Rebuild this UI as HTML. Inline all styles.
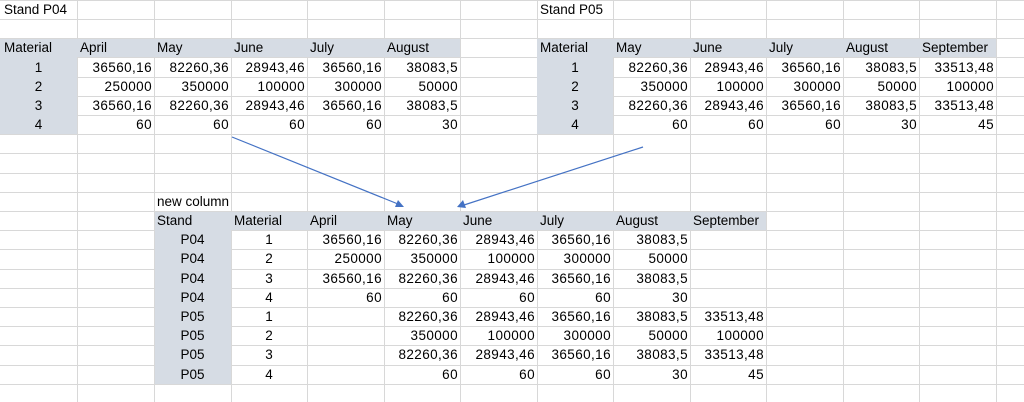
<!DOCTYPE html>
<html><head><meta charset="utf-8"><style>
body{margin:0;width:1024px;height:402px;overflow:hidden;background:#fff;position:relative;font-family:"Liberation Sans",sans-serif;font-size:13.5px;color:#000}
.v{position:absolute;top:0;width:1px;height:402px;background:#d8d8d8}
.h{position:absolute;left:0;height:1px;width:1024px;background:#d8d8d8}
.g{position:absolute;background:#d6dce4}
.c{position:absolute;height:19px;line-height:20px;white-space:nowrap;box-sizing:border-box;padding:0 3px}
.r{text-align:right;letter-spacing:0.4px;padding-right:2px}.m{text-align:center}.l{text-align:left}
</style></head><body>
<div class="v" style="left:77px"></div><div class="v" style="left:154px"></div><div class="v" style="left:231px"></div><div class="v" style="left:307px"></div><div class="v" style="left:384px"></div><div class="v" style="left:460px"></div><div class="v" style="left:537px"></div><div class="v" style="left:613px"></div><div class="v" style="left:690px"></div><div class="v" style="left:766px"></div><div class="v" style="left:843px"></div><div class="v" style="left:919px"></div><div class="v" style="left:996px"></div>
<div class="h" style="top:0"></div><div class="h" style="top:19px"></div><div class="h" style="top:38px"></div><div class="h" style="top:57px"></div><div class="h" style="top:77px"></div><div class="h" style="top:96px"></div><div class="h" style="top:115px"></div><div class="h" style="top:134px"></div><div class="h" style="top:153px"></div><div class="h" style="top:173px"></div><div class="h" style="top:192px"></div><div class="h" style="top:211px"></div><div class="h" style="top:230px"></div><div class="h" style="top:249px"></div><div class="h" style="top:269px"></div><div class="h" style="top:288px"></div><div class="h" style="top:307px"></div><div class="h" style="top:326px"></div><div class="h" style="top:345px"></div><div class="h" style="top:365px"></div><div class="h" style="top:384px"></div>
<div style="position:absolute;left:155px;top:193px;width:75px;height:18px;background:#fff"></div>
<div class="g" style="left:0;top:39px;width:460px;height:18px"></div>
<div class="g" style="left:0;top:39px;width:77px;height:95px"></div>
<div class="g" style="left:537px;top:39px;width:459px;height:18px"></div>
<div class="g" style="left:537px;top:39px;width:76px;height:95px"></div>
<div class="g" style="left:155px;top:212px;width:611px;height:18px"></div>
<div class="g" style="left:155px;top:212px;width:76px;height:172px"></div>

<div class="c l" style="left:1px;top:0">Stand P04</div>
<div class="c l" style="left:537px;top:0">Stand P05</div>
<div class="c l" style="left:154px;top:192px">new column</div>

<div class="c l" style="left:1px;top:38px">Material</div><div class="c l" style="left:77px;top:38px">April</div><div class="c l" style="left:154px;top:38px">May</div><div class="c l" style="left:231px;top:38px">June</div><div class="c l" style="left:307px;top:38px">July</div><div class="c l" style="left:384px;top:38px">August</div>
<div class="c m" style="left:0;width:77px;top:58px">1</div><div class="c r" style="left:77px;width:77px;top:58px">36560,16</div><div class="c r" style="left:154px;width:77px;top:58px">82260,36</div><div class="c r" style="left:231px;width:76px;top:58px">28943,46</div><div class="c r" style="left:307px;width:77px;top:58px">36560,16</div><div class="c r" style="left:384px;width:76px;top:58px">38083,5</div>
<div class="c m" style="left:0;width:77px;top:77px">2</div><div class="c r" style="left:77px;width:77px;top:77px">250000</div><div class="c r" style="left:154px;width:77px;top:77px">350000</div><div class="c r" style="left:231px;width:76px;top:77px">100000</div><div class="c r" style="left:307px;width:77px;top:77px">300000</div><div class="c r" style="left:384px;width:76px;top:77px">50000</div>
<div class="c m" style="left:0;width:77px;top:96px">3</div><div class="c r" style="left:77px;width:77px;top:96px">36560,16</div><div class="c r" style="left:154px;width:77px;top:96px">82260,36</div><div class="c r" style="left:231px;width:76px;top:96px">28943,46</div><div class="c r" style="left:307px;width:77px;top:96px">36560,16</div><div class="c r" style="left:384px;width:76px;top:96px">38083,5</div>
<div class="c m" style="left:0;width:77px;top:115px">4</div><div class="c r" style="left:77px;width:77px;top:115px">60</div><div class="c r" style="left:154px;width:77px;top:115px">60</div><div class="c r" style="left:231px;width:76px;top:115px">60</div><div class="c r" style="left:307px;width:77px;top:115px">60</div><div class="c r" style="left:384px;width:76px;top:115px">30</div>

<div class="c l" style="left:537px;top:38px">Material</div><div class="c l" style="left:613px;top:38px">May</div><div class="c l" style="left:690px;top:38px">June</div><div class="c l" style="left:766px;top:38px">July</div><div class="c l" style="left:843px;top:38px">August</div><div class="c l" style="left:919px;top:38px">September</div>
<div class="c m" style="left:537px;width:76px;top:58px">1</div><div class="c r" style="left:613px;width:77px;top:58px">82260,36</div><div class="c r" style="left:690px;width:76px;top:58px">28943,46</div><div class="c r" style="left:766px;width:77px;top:58px">36560,16</div><div class="c r" style="left:843px;width:76px;top:58px">38083,5</div><div class="c r" style="left:919px;width:77px;top:58px">33513,48</div>
<div class="c m" style="left:537px;width:76px;top:77px">2</div><div class="c r" style="left:613px;width:77px;top:77px">350000</div><div class="c r" style="left:690px;width:76px;top:77px">100000</div><div class="c r" style="left:766px;width:77px;top:77px">300000</div><div class="c r" style="left:843px;width:76px;top:77px">50000</div><div class="c r" style="left:919px;width:77px;top:77px">100000</div>
<div class="c m" style="left:537px;width:76px;top:96px">3</div><div class="c r" style="left:613px;width:77px;top:96px">82260,36</div><div class="c r" style="left:690px;width:76px;top:96px">28943,46</div><div class="c r" style="left:766px;width:77px;top:96px">36560,16</div><div class="c r" style="left:843px;width:76px;top:96px">38083,5</div><div class="c r" style="left:919px;width:77px;top:96px">33513,48</div>
<div class="c m" style="left:537px;width:76px;top:115px">4</div><div class="c r" style="left:613px;width:77px;top:115px">60</div><div class="c r" style="left:690px;width:76px;top:115px">60</div><div class="c r" style="left:766px;width:77px;top:115px">60</div><div class="c r" style="left:843px;width:76px;top:115px">30</div><div class="c r" style="left:919px;width:77px;top:115px">45</div>

<div class="c l" style="left:154px;top:211px">Stand</div><div class="c l" style="left:231px;top:211px">Material</div><div class="c l" style="left:307px;top:211px">April</div><div class="c l" style="left:384px;top:211px">May</div><div class="c l" style="left:460px;top:211px">June</div><div class="c l" style="left:537px;top:211px">July</div><div class="c l" style="left:613px;top:211px">August</div><div class="c l" style="left:690px;top:211px">September</div>

<div class="c m" style="left:154px;width:77px;top:230px">P04</div><div class="c m" style="left:231px;width:76px;top:230px">1</div><div class="c r" style="left:307px;width:77px;top:230px">36560,16</div><div class="c r" style="left:384px;width:76px;top:230px">82260,36</div><div class="c r" style="left:460px;width:77px;top:230px">28943,46</div><div class="c r" style="left:537px;width:76px;top:230px">36560,16</div><div class="c r" style="left:613px;width:77px;top:230px">38083,5</div>
<div class="c m" style="left:154px;width:77px;top:249px">P04</div><div class="c m" style="left:231px;width:76px;top:249px">2</div><div class="c r" style="left:307px;width:77px;top:249px">250000</div><div class="c r" style="left:384px;width:76px;top:249px">350000</div><div class="c r" style="left:460px;width:77px;top:249px">100000</div><div class="c r" style="left:537px;width:76px;top:249px">300000</div><div class="c r" style="left:613px;width:77px;top:249px">50000</div>
<div class="c m" style="left:154px;width:77px;top:269px">P04</div><div class="c m" style="left:231px;width:76px;top:269px">3</div><div class="c r" style="left:307px;width:77px;top:269px">36560,16</div><div class="c r" style="left:384px;width:76px;top:269px">82260,36</div><div class="c r" style="left:460px;width:77px;top:269px">28943,46</div><div class="c r" style="left:537px;width:76px;top:269px">36560,16</div><div class="c r" style="left:613px;width:77px;top:269px">38083,5</div>
<div class="c m" style="left:154px;width:77px;top:288px">P04</div><div class="c m" style="left:231px;width:76px;top:288px">4</div><div class="c r" style="left:307px;width:77px;top:288px">60</div><div class="c r" style="left:384px;width:76px;top:288px">60</div><div class="c r" style="left:460px;width:77px;top:288px">60</div><div class="c r" style="left:537px;width:76px;top:288px">60</div><div class="c r" style="left:613px;width:77px;top:288px">30</div>
<div class="c m" style="left:154px;width:77px;top:307px">P05</div><div class="c m" style="left:231px;width:76px;top:307px">1</div><div class="c r" style="left:384px;width:76px;top:307px">82260,36</div><div class="c r" style="left:460px;width:77px;top:307px">28943,46</div><div class="c r" style="left:537px;width:76px;top:307px">36560,16</div><div class="c r" style="left:613px;width:77px;top:307px">38083,5</div><div class="c r" style="left:690px;width:76px;top:307px">33513,48</div>
<div class="c m" style="left:154px;width:77px;top:326px">P05</div><div class="c m" style="left:231px;width:76px;top:326px">2</div><div class="c r" style="left:384px;width:76px;top:326px">350000</div><div class="c r" style="left:460px;width:77px;top:326px">100000</div><div class="c r" style="left:537px;width:76px;top:326px">300000</div><div class="c r" style="left:613px;width:77px;top:326px">50000</div><div class="c r" style="left:690px;width:76px;top:326px">100000</div>
<div class="c m" style="left:154px;width:77px;top:345px">P05</div><div class="c m" style="left:231px;width:76px;top:345px">3</div><div class="c r" style="left:384px;width:76px;top:345px">82260,36</div><div class="c r" style="left:460px;width:77px;top:345px">28943,46</div><div class="c r" style="left:537px;width:76px;top:345px">36560,16</div><div class="c r" style="left:613px;width:77px;top:345px">38083,5</div><div class="c r" style="left:690px;width:76px;top:345px">33513,48</div>
<div class="c m" style="left:154px;width:77px;top:365px">P05</div><div class="c m" style="left:231px;width:76px;top:365px">4</div><div class="c r" style="left:384px;width:76px;top:365px">60</div><div class="c r" style="left:460px;width:77px;top:365px">60</div><div class="c r" style="left:537px;width:76px;top:365px">60</div><div class="c r" style="left:613px;width:77px;top:365px">30</div><div class="c r" style="left:690px;width:76px;top:365px">45</div>

<svg style="position:absolute;left:0;top:0" width="1024" height="402">
<g stroke="#4472c4" stroke-width="1.2" fill="#4472c4">
<line x1="232" y1="137" x2="398" y2="204"/>
<polygon points="404,207 395,207 398,200" stroke="none"/>
<line x1="643" y1="147" x2="464" y2="205"/>
<polygon points="457,207 463,200 466,208" stroke="none"/>
</g></svg>
</body></html>
